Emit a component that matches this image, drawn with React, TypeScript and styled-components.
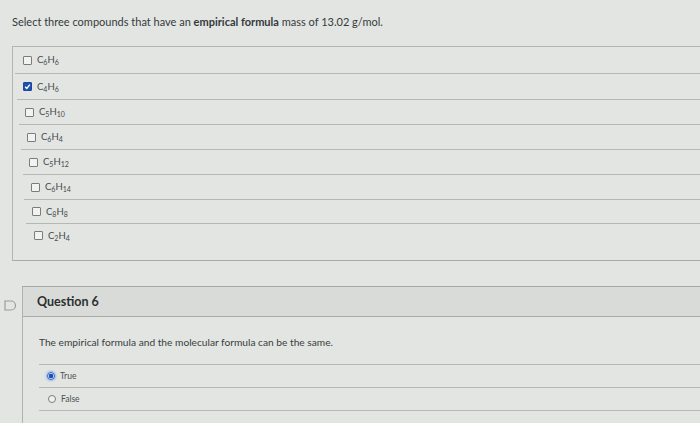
import React from "react";
import styled, { createGlobalStyle } from "styled-components";

const Global = createGlobalStyle`
  html, body {
    margin: 0;
    padding: 0;
    background: #e3e5e2;
    font-family: Lato, "Open Sans", sans-serif;
    color: #2d3b45;
    overflow: hidden;
  }
`;

const Page = styled.div`
  width: 700px;
  height: 423px;
  overflow: hidden;
`;

const Prompt = styled.p`
  margin: 0;
  padding: 15px 0 0 12px;
  height: 46px;
  box-sizing: border-box;
  font-size: 11px;
  color: #343a3c;
  & b {
    font-weight: 700;
  }
`;

const AnswerList = styled.div`
  margin-left: 12px;
  border-top: 1px solid #b3b5b2;
  border-left: 1px solid #b3b5b2;
  border-bottom: 1px solid #a9aba8;
  padding-bottom: 13px;
`;

const Row = styled.div<{ $h: number; $indent: number }>`
  box-sizing: border-box;
  height: ${(p) => p.$h}px;
  margin-left: ${(p) => p.$indent}px;
  display: flex;
  align-items: center;
  gap: 5px;
  padding-left: 8px;
  border-top: 1px solid #b6b8b5;
  font-size: 9.5px;
  color: #444a4c;
  &:first-child {
    border-top: none;
  }
  & sub {
    font-size: 7px;
    vertical-align: -1.5px;
  }
`;

const Box = styled.span<{ $on?: boolean }>`
  width: 9px;
  height: 9px;
  box-sizing: border-box;
  border: 1px solid ${(p) => (p.$on ? "#1b47a3" : "#7a7d7c")};
  background: ${(p) => (p.$on ? "#1b4fb0" : "#f2f3f1")};
  border-radius: 1px;
  display: inline-flex;
  align-items: center;
  justify-content: center;
`;

const QuestionWrap = styled.div`
  display: flex;
  margin-top: 25px;
`;

const FlagCol = styled.div`
  width: 22px;
  padding: 9px 0 0 4px;
  box-sizing: border-box;
`;

const Card = styled.div`
  flex: 1;
  border-left: 1px solid #b0b2af;
  border-top: 1px solid #a6a8a5;
`;

const Header = styled.div`
  height: 29px;
  background: #d9dbd8;
  border-bottom: 1px solid #a9aba8;
  display: flex;
  align-items: center;
  padding-left: 14px;
  font-size: 12.5px;
  font-weight: 700;
  color: #2b2f31;
`;

const Body = styled.div`
  padding: 19px 0 12px 16px;
  font-size: 10.2px;
  color: #383e40;
`;

const BodyText = styled.p`
  margin: 0 0 16px 0;
`;

const Choices = styled.div`
  border-top: 1px solid #b6b8b5;
`;

const Choice = styled.div<{ $indent: number }>`
  height: 22px;
  display: flex;
  align-items: center;
  gap: 5px;
  padding-left: ${(p) => p.$indent}px;
  border-bottom: 1px solid #b6b8b5;
  font-size: 8.5px;
  color: #4a5052;
`;

const Radio = styled.span<{ $on?: boolean }>`
  width: 8px;
  height: 8px;
  box-sizing: border-box;
  border-radius: 50%;
  border: 1px solid ${(p) => (p.$on ? "#2a66d0" : "#7b7e7d")};
  background: ${(p) =>
    p.$on ? "radial-gradient(circle, #1d4fae 0 2px, #cfdcf3 2.5px)" : "#f1f2f0"};
  box-shadow: ${(p) => (p.$on ? "0 0 2px 1px rgba(60,120,230,0.45)" : "none")};
`;

const Formula = ({ c, h }: { c: string; h: string }) => (
  <span>
    C<sub>{c}</sub>H<sub>{h}</sub>
  </span>
);

const answers = [
  { c: "6", h: "6", h2: 26, i: 2 },
  { c: "4", h: "6", h2: 26, i: 2, on: true },
  { c: "5", h: "10", h2: 25, i: 4 },
  { c: "6", h: "4", h2: 25, i: 6 },
  { c: "5", h: "12", h2: 25, i: 8 },
  { c: "6", h: "14", h2: 25, i: 10 },
  { c: "8", h: "8", h2: 24, i: 11 },
  { c: "2", h: "4", h2: 24, i: 13 },
];

export default function App() {
  return (
    <Page>
      <Global />
      <Prompt>
        Select three compounds that have an <b>empirical formula</b> mass of 13.02 g/mol.
      </Prompt>
      <AnswerList>
        {answers.map((a, k) => (
          <Row key={k} $h={a.h2} $indent={a.i}>
            <Box $on={a.on}>
              {a.on && (
                <svg width="7" height="7" viewBox="0 0 6 6">
                  <path d="M1 3.2 L2.4 4.6 L5 1.4" fill="none" stroke="#fff" strokeWidth="1.2" />
                </svg>
              )}
            </Box>
            <Formula c={a.c} h={a.h} />
          </Row>
        ))}
      </AnswerList>
      <QuestionWrap>
        <FlagCol>
          <svg width="13" height="11" viewBox="0 0 13 11">
            <path
              d="M1 1 H7 A4.5 4.5 0 0 1 7 10 H1 Z"
              fill="none"
              stroke="#9a9d9b"
              strokeWidth="1.2"
            />
          </svg>
        </FlagCol>
        <Card>
          <Header>Question 6</Header>
          <Body>
            <BodyText>The empirical formula and the molecular formula can be the same.</BodyText>
            <Choices>
              <Choice $indent={8}>
                <Radio $on />
                True
              </Choice>
              <Choice $indent={9}>
                <Radio />
                False
              </Choice>
            </Choices>
          </Body>
        </Card>
      </QuestionWrap>
    </Page>
  );
}
